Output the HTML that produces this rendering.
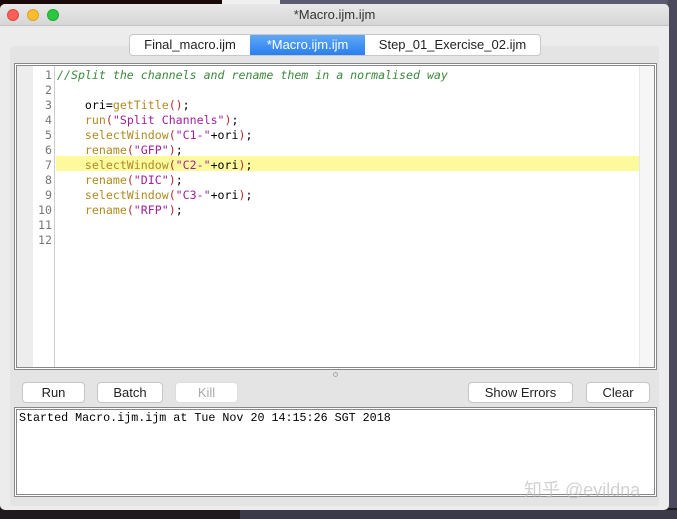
<!DOCTYPE html>
<html><head><meta charset="utf-8"><style>
*{margin:0;padding:0;box-sizing:border-box}
body{width:677px;height:519px;overflow:hidden;background:#2a2630;font-family:"Liberation Sans",sans-serif;position:relative}
.bgtop{position:absolute;left:0;top:0;width:677px;height:6px;background:#1a0808}
.bgtop2{position:absolute;left:222px;top:0;width:58px;height:6px;background:#f0f0f0}
.bgtop3{position:absolute;left:280px;top:0;width:397px;height:6px;background:#5c5c70}
.bgright{position:absolute;left:668px;top:0;width:9px;height:519px;background:#4a4a5c}
.bgbot{position:absolute;left:0;top:508px;width:677px;height:11px;background:#1e1a1e}
.bgbot2{position:absolute;left:240px;top:510px;width:437px;height:9px;background:#3a3a48}
.win{position:absolute;left:0;top:4px;width:669px;height:506px;background:#ececec;border-radius:5px 5px 5px 5px;overflow:hidden}
.title{height:22px;background:linear-gradient(#e8e8e8,#d6d6d6);border-bottom:1px solid #c4c4c4;text-align:center;font-size:13px;line-height:22px;color:#333}
.dot{position:absolute;top:5px;width:12px;height:12px;border-radius:50%}
.panel{position:absolute;left:10px;top:42px;width:649px;height:460px;background:#e4e4e4;border-radius:4px}
.tabs{position:absolute;left:129px;top:30px;height:22px;display:flex;border:1px solid #c8c8c8;border-radius:4px;background:#fff;overflow:hidden;font-size:13px;line-height:20px;color:#222}
.tabs div{text-align:center}
.tabs .sel{background:linear-gradient(#5fa8f5,#2a7ff0);color:#fff}
.ed{position:absolute;left:14px;top:59px;width:643px;height:307px;border:3px double #888;background:#fff}
.gut1{position:absolute;left:0;top:0;width:16px;height:301px;background:#ededed}
.gut2{position:absolute;left:16px;top:0;width:22px;height:301px;border-right:1px solid #ccc;background:#fff}
.rstrip{position:absolute;left:622px;top:0;width:15px;height:301px;background:#f6f6f6;border-left:1px solid #e8e8e8}
.hl{position:absolute;left:39px;top:90px;width:583px;height:15px;background:#fdfa9e}
.code{position:absolute;left:0;top:2px;font-family:"DejaVu Sans Mono",monospace;font-size:11.6px;line-height:15px;white-space:pre;color:#000}
.ln{position:absolute;left:16px;width:19px;text-align:right;color:#777}
.tx{position:absolute;left:40px}
.c{color:#3a8a3a;font-style:italic}.f{color:#b08a20}.s{color:#a0209a}.p{color:#b03030}
.btn{position:absolute;top:378px;height:21px;background:#fff;border:1px solid #c6c6c6;border-radius:4px;font-size:13px;line-height:19px;text-align:center;color:#222}
.out{position:absolute;left:14px;top:403px;width:643px;height:90px;border:3px double #888;background:#fff;font-family:"Liberation Mono",monospace;font-size:11.7px;padding:1px 2px;color:#000}
.wm{position:absolute;left:524px;top:476px;font-size:18px;color:rgba(190,190,190,.7);font-family:"Liberation Sans","Noto Sans CJK SC",sans-serif}
</style></head><body>
<div class="bgtop"></div><div class="bgtop2"></div><div class="bgtop3"></div><div class="bgright"></div><div class="bgbot"></div><div class="bgbot2"></div>
<div class="win">
<div class="title">*Macro.ijm.ijm</div>
<div class="dot" style="left:7px;background:#fc5f57;border:1px solid #de4a42"></div>
<div class="dot" style="left:27px;background:#fdbc2e;border:1px solid #dea12a"></div>
<div class="dot" style="left:47px;background:#29c840;border:1px solid #1faa32"></div>
<div class="panel"></div>
<div class="tabs"><div style="width:120px">Final_macro.ijm</div><div class="sel" style="width:115px">*Macro.ijm.ijm</div><div style="width:175px">Step_01_Exercise_02.ijm</div></div>
<div class="ed">
<div class="gut1"></div><div class="gut2"></div><div class="rstrip"></div><div class="hl"></div>
<div class="code">
<div class="ln" style="top:0">1</div><div class="ln" style="top:15px">2</div><div class="ln" style="top:30px">3</div><div class="ln" style="top:45px">4</div><div class="ln" style="top:60px">5</div><div class="ln" style="top:75px">6</div><div class="ln" style="top:90px">7</div><div class="ln" style="top:105px">8</div><div class="ln" style="top:120px">9</div><div class="ln" style="top:135px">10</div><div class="ln" style="top:150px">11</div><div class="ln" style="top:165px">12</div>
<div class="tx" style="top:0"><span class="c">//Split the channels and rename them in a normalised way</span></div>
<div class="tx" style="top:30px">    ori=<span class="f">getTitle</span><span class="p">()</span>;</div>
<div class="tx" style="top:45px">    <span class="f">run</span><span class="p">(</span><span class="s">"Split Channels"</span><span class="p">)</span>;</div>
<div class="tx" style="top:60px">    <span class="f">selectWindow</span><span class="p">(</span><span class="s">"C1-"</span>+ori<span class="p">)</span>;</div>
<div class="tx" style="top:75px">    <span class="f">rename</span><span class="p">(</span><span class="s">"GFP"</span><span class="p">)</span>;</div>
<div class="tx" style="top:90px">    <span class="f">selectWindow</span><span class="p">(</span><span class="s">"C2-"</span>+ori<span class="p">)</span>;</div>
<div class="tx" style="top:105px">    <span class="f">rename</span><span class="p">(</span><span class="s">"DIC"</span><span class="p">)</span>;</div>
<div class="tx" style="top:120px">    <span class="f">selectWindow</span><span class="p">(</span><span class="s">"C3-"</span>+ori<span class="p">)</span>;</div>
<div class="tx" style="top:135px">    <span class="f">rename</span><span class="p">(</span><span class="s">"RFP"</span><span class="p">)</span>;</div>
</div>
</div>
<div style="position:absolute;left:333px;top:368px;width:5px;height:5px;border-radius:50%;border:1px solid #aaa"></div>
<div class="btn" style="left:22px;width:63px">Run</div>
<div class="btn" style="left:97px;width:66px">Batch</div>
<div class="btn" style="left:175px;width:63px;color:#aaa;border-color:#ddd">Kill</div>
<div class="btn" style="left:468px;width:105px">Show Errors</div>
<div class="btn" style="left:586px;width:64px">Clear</div>
<div class="out">Started Macro.ijm.ijm at Tue Nov 20 14:15:26 SGT 2018</div>
</div>
<div class="wm">知乎 @evildna</div>
</body></html>
